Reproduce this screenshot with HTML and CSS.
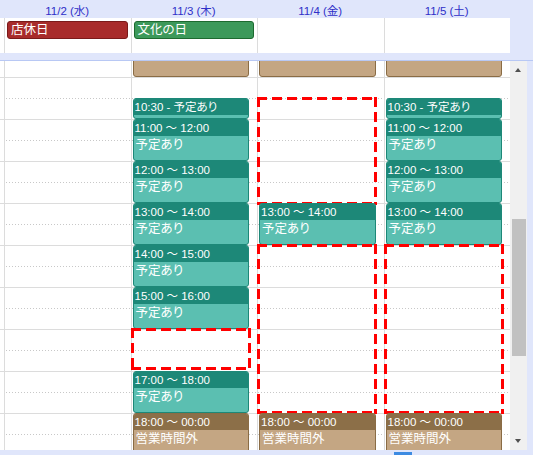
FILE: index.html
```html
<!DOCTYPE html>
<html lang="ja">
<head>
<meta charset="utf-8">
<title>Calendar</title>
<link rel="stylesheet" href="styles.css">
</head>
<body>
<div class="cal">
  <div class="head-row">
    <div class="gutter"></div>
    <div class="date">11/2 (水)</div>
    <div class="date">11/3 (木)</div>
    <div class="date">11/4 (金)</div>
    <div class="date">11/5 (土)</div>
  </div>
  <div class="allday-row">
    <div class="allday-grid">
      <div class="gutter"></div>
      <div class="acell"><div class="hol red">店休日</div></div>
      <div class="acell"><div class="hol green">文化の日</div></div>
      <div class="acell"></div>
      <div class="acell"></div>
    </div>
  </div>
  <div class="band"></div>
  <div class="body">
    <div class="grid">
      <div class="slots">
        <div class="slot first"></div>
        <div class="slot half"></div><div class="slot hour"></div>
        <div class="slot half"></div><div class="slot hour"></div>
        <div class="slot half"></div><div class="slot hour"></div>
        <div class="slot half"></div><div class="slot hour"></div>
        <div class="slot half"></div><div class="slot hour"></div>
        <div class="slot half"></div><div class="slot hour"></div>
        <div class="slot half"></div><div class="slot hour"></div>
        <div class="slot half"></div><div class="slot hour"></div>
        <div class="slot half"></div>
        <div class="slot last"></div>
      </div>
      <div class="day c1"></div>
      <div class="day c2">
        <div class="ev off" style="top:-30px;height:46px"><div class="b"></div></div>
        <div class="ev" style="top:37px;height:21px"><div class="h">10:30 - 予定あり</div></div>
        <div class="ev" style="top:58px;height:42px"><div class="h">11:00 ～ 12:00</div><div class="b">予定あり</div></div>
        <div class="ev" style="top:100px;height:42px"><div class="h">12:00 ～ 13:00</div><div class="b">予定あり</div></div>
        <div class="ev" style="top:142px;height:42px"><div class="h">13:00 ～ 14:00</div><div class="b">予定あり</div></div>
        <div class="ev" style="top:184px;height:42px"><div class="h">14:00 ～ 15:00</div><div class="b">予定あり</div></div>
        <div class="ev" style="top:226px;height:42px"><div class="h">15:00 ～ 16:00</div><div class="b">予定あり</div></div>
        <div class="gap" style="top:267px;height:42px"></div>
        <div class="ev" style="top:310px;height:42px"><div class="h">17:00 ～ 18:00</div><div class="b">予定あり</div></div>
        <div class="ev off" style="top:352px;height:80px"><div class="h">18:00 ～ 00:00</div><div class="b">営業時間外</div></div>
      </div>
      <div class="day c3">
        <div class="ev off" style="top:-30px;height:46px"><div class="b"></div></div>
        <div class="gap" style="top:36px;height:108px"></div>
        <div class="ev" style="top:142px;height:42px"><div class="h">13:00 ～ 14:00</div><div class="b">予定あり</div></div>
        <div class="gap" style="top:183px;height:170px"></div>
        <div class="ev off" style="top:352px;height:80px"><div class="h">18:00 ～ 00:00</div><div class="b">営業時間外</div></div>
      </div>
      <div class="day c4">
        <div class="ev off" style="top:-30px;height:46px"><div class="b"></div></div>
        <div class="ev" style="top:37px;height:21px"><div class="h">10:30 - 予定あり</div></div>
        <div class="ev" style="top:58px;height:42px"><div class="h">11:00 ～ 12:00</div><div class="b">予定あり</div></div>
        <div class="ev" style="top:100px;height:42px"><div class="h">12:00 ～ 13:00</div><div class="b">予定あり</div></div>
        <div class="ev" style="top:142px;height:42px"><div class="h">13:00 ～ 14:00</div><div class="b">予定あり</div></div>
        <div class="gap" style="top:183px;height:170px"></div>
        <div class="ev off" style="top:352px;height:80px"><div class="h">18:00 ～ 00:00</div><div class="b">営業時間外</div></div>
      </div>
    </div>
    <div class="scrollbar">
      <div class="arrow up"></div>
      <div class="track"><div class="thumb"></div></div>
      <div class="arrow down"></div>
    </div>
    <div class="rfill"></div>
  </div>
  <div class="footer"><span class="hbar"></span></div>
</div>
</body>
</html>
```
FILE: styles.css
```css
* { box-sizing: border-box; }
html, body { margin: 0; padding: 0; }
body {
  background: #e0e6fb;
  font-family: "Liberation Sans", "Noto Sans CJK JP", sans-serif;
  font-feature-settings: "palt";
  width: 533px;
  height: 455px;
  overflow: hidden;
}
.cal { width: 533px; }

.head-row {
  display: grid;
  grid-template-columns: 4px repeat(4, 1fr) 23px;
  height: 18px;
}
.head-row .date {
  text-align: center;
  font-size: 11.5px;
  line-height: 16px;
  padding-top: 3px;
  color: #2f2fc8;
}

.allday-row { display: flex; height: 35px; }
.allday-grid {
  width: 510px;
  display: grid;
  grid-template-columns: 4px repeat(4, 1fr);
  background: #fff;
}
.acell { border-left: 1px solid #dcdcdc; padding: 3px 2px 0 2px; }
.hol {
  height: 18px;
  border-radius: 3px;
  color: #fff;
  font-size: 12.5px;
  line-height: 16px;
  padding-left: 3px;
  margin-right: 1px;
}
.hol.red { background: #a82b2b; border: 1px solid #7a1a1a; }
.hol.green { background: #3c995a; border: 1px solid #1d6a2f; }

.band { height: 8px; border-bottom: 1px solid #b8c8f4; }

.body { display: flex; height: 389px; }
.grid {
  width: 510px;
  display: grid;
  grid-template-columns: 4px repeat(4, 1fr);
  grid-template-rows: 389px;
  background: #fff;
  overflow: hidden;
}
.slots { grid-column: 1 / -1; grid-row: 1; }
.slot { height: 21px; }
.slot.first { height: 17px; border-bottom: 1px solid #dcdcdc; }
.slot.half {
  border-bottom: 1px dotted #cfcfcf;
  border-image: linear-gradient(90deg, #fff 0 5px, transparent 5px) 1;
}
.slot.half {
  border-bottom: none;
  background:
    linear-gradient(90deg, #fff 0 5px, transparent 5px) bottom / 100% 1px no-repeat,
    repeating-linear-gradient(90deg, #c8c8c8 0 1px, transparent 1px 3px) bottom / 100% 1px no-repeat;
}
.slot.hour { border-bottom: 1px solid #dcdcdc; }
.slot.last { height: 14px; }
.day {
  grid-row: 1;
  position: relative;
  border-left: 1px solid #dcdcdc;
}
.day.c1 { grid-column: 2; }
.day.c2 { grid-column: 3; }
.day.c3 { grid-column: 4; }
.day.c4 { grid-column: 5; }

.ev {
  position: absolute;
  left: 1px;
  right: 8px;
  background: #5bbfb1;
  border: 1px solid #1d8878;
  border-radius: 3px;
  overflow: hidden;
  color: #fff;
}
.ev .h {
  background: #1d8878;
  height: 16px;
  line-height: 16px;
  font-size: 11.5px;
  padding-left: 1px;
  white-space: nowrap;
}
.ev .b {
  font-size: 12.5px;
  line-height: 16px;
  padding: 1px 2px 0 2px;
}
.ev.off { background: #c4a683; border-color: #8a6c45; }
.ev.off .h { background: #8c6f48; }

.gap {
  position: absolute;
  left: -1px;
  width: 120px;
  background:
    repeating-linear-gradient(90deg, #ff0000 0 10px, transparent 10px 15px) top / 100% 3px no-repeat,
    repeating-linear-gradient(90deg, #ff0000 0 10px, transparent 10px 15px) bottom / 100% 3px no-repeat,
    repeating-linear-gradient(180deg, #ff0000 0 10px, transparent 10px 15px) left / 3px 100% no-repeat,
    repeating-linear-gradient(180deg, #ff0000 0 10px, transparent 10px 15px) right / 3px 100% no-repeat;
}

.scrollbar {
  width: 17px;
  background: #f0f0f0;
  display: flex;
  flex-direction: column;
  align-items: stretch;
}
.arrow { height: 17px; position: relative; }
.arrow::after {
  content: "";
  position: absolute;
  left: 5px;
  border-left: 3.5px solid transparent;
  border-right: 3.5px solid transparent;
}
.arrow.up::after { top: 7px; border-bottom: 4px solid #505050; }
.arrow.down::after { top: 6px; border-top: 4px solid #505050; }
.track { flex: 1; padding: 141px 1px 0 2px; }
.thumb { height: 137px; background: #c1c1c1; }
.rfill { flex: 1; }

.footer { height: 6px; }
.hbar {
  display: block;
  margin-left: 394px;
  margin-top: 2px;
  width: 18px;
  height: 4px;
  background: #3d8be2;
}
```
